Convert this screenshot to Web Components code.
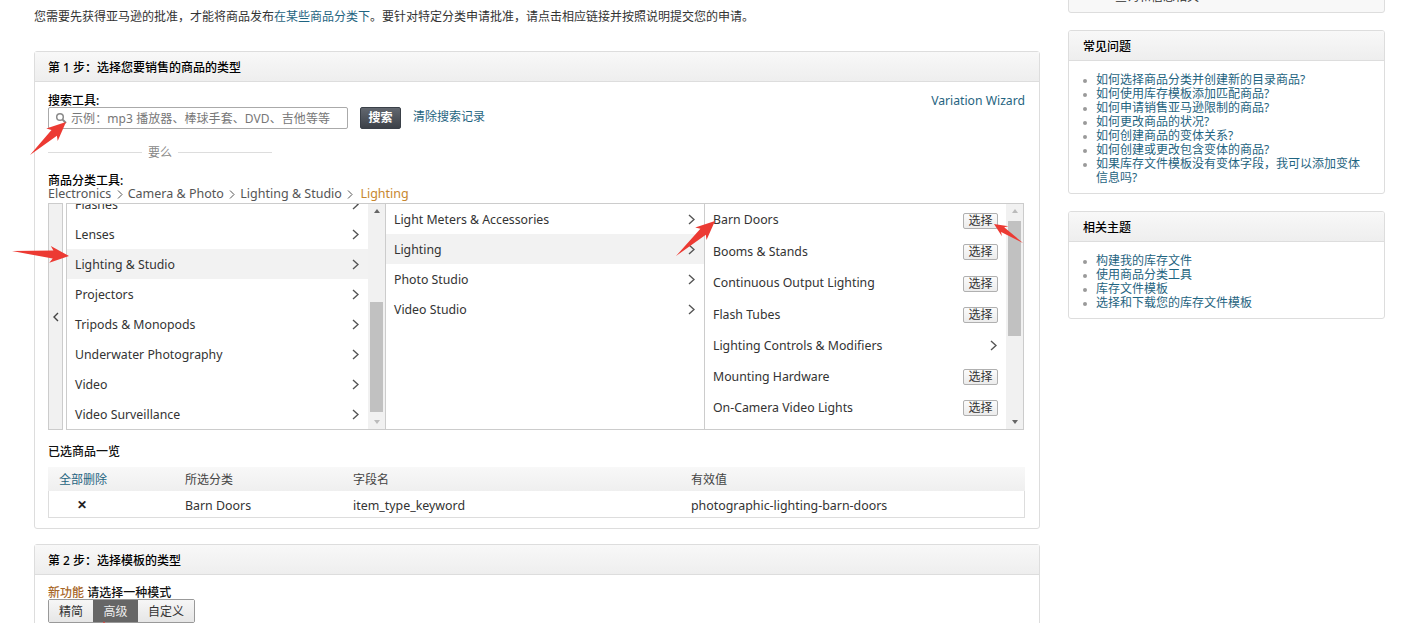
<!DOCTYPE html>
<html lang="zh">
<head>
<meta charset="utf-8">
<title>选择商品分类</title>
<style>
  html, body { margin: 0; height: 623px; overflow: hidden; background: #fff; }
  body { font: 12px/14px "Noto Sans", "Noto Sans CJK SC", sans-serif; color: #333; }
</style>
</head>
<body>
<seller-page>
  <div slot="intro">您需要先获得亚马逊的批准，才能将商品发布<a href="#" style="color:#1f6481;text-decoration:none">在某些商品分类下</a>。要针对特定分类申请批准，请点击相应链接并按照说明提交您的申请。</div>

  <step-card slot="main" heading="第 1 步：选择您要销售的商品的类型" style="height:478px">
    <search-tool></search-tool>
    <category-browser></category-browser>
    <selected-table></selected-table>
  </step-card>

  <step-card slot="main" heading="第 2 步：选择模板的类型" style="height:120px;margin-top:15px">
    <mode-switch></mode-switch>
  </step-card>

  <side-card slot="side" style="height:30px;margin-top:-17px;background:#f8f8f8">
    <div style="padding:6px 0 0 46px;color:#333">查询和信息相关</div>
  </side-card>
  <side-card slot="side" heading="常见问题" style="margin-top:17px">
    <link-list items="如何选择商品分类并创建新的目录商品?|如何使用库存模板添加匹配商品?|如何申请销售亚马逊限制的商品?|如何更改商品的状况?|如何创建商品的变体关系?|如何创建或更改包含变体的商品?|如果库存文件模板没有变体字段，我可以添加变体信息吗?"></link-list>
  </side-card>
  <side-card slot="side" heading="相关主题" style="margin-top:17px">
    <link-list items="构建我的库存文件|使用商品分类工具|库存文件模板|选择和下载您的库存文件模板"></link-list>
  </side-card>

  <red-arrow slot="over" x1="30" y1="155" x2="66" y2="122"></red-arrow>
  <red-arrow slot="over" x1="12" y1="251" x2="69" y2="256"></red-arrow>
  <red-arrow slot="over" x1="676" y1="256" x2="715" y2="221"></red-arrow>
  <red-arrow slot="over" x1="1023" y1="243" x2="994" y2="224" size="0.7"></red-arrow>
  <red-arrow slot="over" x1="104" y1="640" x2="104" y2="621"></red-arrow>
</seller-page>

<script>
class SellerPage extends HTMLElement {
  constructor() {
    super();
    this.attachShadow({mode: "open"}).innerHTML = `
      <style>
        :host { display: flex; gap: 28px; padding-left: 34px; height: 623px; overflow: hidden; position: relative; }
        .main { width: 1006px; flex: none; }
        .intro { height: 51px; padding-top: 10px; box-sizing: border-box; }
        .side { width: 317px; flex: none; }
      </style>
      <div class="main">
        <div class="intro"><slot name="intro"></slot></div>
        <slot name="main"></slot>
      </div>
      <div class="side"><slot name="side"></slot></div>
      <slot name="over"></slot>`;
  }
}

class StepCard extends HTMLElement {
  constructor() {
    super();
    this.attachShadow({mode: "open"}).innerHTML = `
      <style>
        :host { display: block; border: 1px solid #ddd; border-radius: 3px; box-sizing: border-box; }
        header { height: 30px; box-sizing: border-box; padding: 0 13px; line-height: 32px; font-weight: 500; color: #000;
          background: linear-gradient(#f8f8f8, #eeeeee); border-bottom: 1px solid #ddd; }
        .body { padding: 0 14px 0 13px; }
      </style>
      <header></header>
      <div class="body"><slot></slot></div>`;
    this.shadowRoot.querySelector("header").textContent = this.getAttribute("heading");
  }
}

class SideCard extends HTMLElement {
  constructor() {
    super();
    this.attachShadow({mode: "open"}).innerHTML = `
      <style>
        :host { display: block; border: 1px solid #ddd; border-radius: 3px; box-sizing: border-box; overflow: hidden; }
        header { height: 30px; box-sizing: border-box; padding: 0 14px; line-height: 32px; font-weight: 500; color: #000;
          background: linear-gradient(#f8f8f8, #eeeeee); border-bottom: 1px solid #ddd; }
      </style>
      <header></header>
      <slot></slot>`;
    const h = this.shadowRoot.querySelector("header");
    if (this.hasAttribute("heading")) h.textContent = this.getAttribute("heading");
    else h.remove();
  }
}

class LinkList extends HTMLElement {
  constructor() {
    super();
    this.attachShadow({mode: "open"}).innerHTML = `
      <style>
        :host { display: block; padding: 12px 24px 8px 27px; }
        ul { margin: 0; padding: 0; list-style: none; }
        li { position: relative; line-height: 14px; color: #1f6481; }
        li::before { content: ""; position: absolute; left: -13px; top: 6px; width: 4px; height: 4px; border-radius: 50%; background: #9a9a9a; }
      </style>
      <ul></ul>`;
    const ul = this.shadowRoot.querySelector("ul");
    this.getAttribute("items").split("|").forEach(text => {
      const li = document.createElement("li");
      li.textContent = text;
      ul.appendChild(li);
    });
  }
}

class SearchTool extends HTMLElement {
  constructor() {
    super();
    this.attachShadow({mode: "open"}).innerHTML = `
      <style>
        :host { display: block; position: relative; padding-top: 12px; }
        .label { font-weight: 500; color: #000; height: 13px; line-height: 14px; }
        .row { display: flex; align-items: center; height: 22px; }
        .input { width: 300px; height: 22px; box-sizing: border-box; border: 1px solid #aaa; border-radius: 2px;
          display: flex; align-items: center; gap: 4px; padding-left: 6px; color: #777; }
        .input span { position: relative; top: 1px; letter-spacing: .08px; }
        button { margin-left: 12px; width: 41px; height: 22px; padding: 0; border: 1px solid #3a4048; border-radius: 2px;
          background: linear-gradient(#62676f, #3c4148); color: #fff; font: inherit; font-weight: 700; }
        a { margin-left: 12px; color: #1f6481; text-decoration: none; position: relative; top: -1px; }
        .wizard { position: absolute; right: 0; top: 12px; margin: 0; font-size: 12.2px; }
        .or { display: flex; align-items: center; width: 224px; gap: 6px; margin-top: 16px; color: #888; height: 14px; line-height: 14px; }
        .or span { position: relative; top: 1px; }
        .or::before, .or::after { content: ""; height: 1px; background: #ddd; }
        .or::before { width: 94px; }
        .or::after { flex: 1; }
      </style>
      <div class="label">搜索工具:</div>
      <div class="row">
        <div class="input">
          <svg width="12" height="12" viewBox="0 0 12 12" fill="none" stroke="#8a8a8a"><circle cx="5" cy="5" r="3.3" stroke-width="1.5"/><path d="M7.6 7.6L11 11" stroke-width="2"/></svg>
          <span>示例：mp3 播放器、棒球手套、DVD、吉他等等</span>
        </div>
        <button>搜索</button>
        <a href="#">清除搜索记录</a>
      </div>
      <a class="wizard" href="#">Variation Wizard</a>
      <div class="or"><span>要么</span></div>`;
  }
}

class CatRow extends HTMLElement {
  constructor() {
    super();
    const kind = this.getAttribute("kind") || "more";
    this.attachShadow({mode: "open"}).innerHTML = `
      <style>
        :host { display: flex; align-items: center; justify-content: space-between; height: 30px; box-sizing: border-box;
          padding: 0 9px 0 8px; font-size: 12.3px; color: #333; }
        :host([selected]) { background: #f2f2f2; }
        :host([kind="pick"]) { padding-right: 8px; }
        span { position: relative; top: 1px; }
        svg { flex: none; }
        button { width: 35px; height: 16px; margin-top: 3px; padding: 0; box-sizing: border-box; border: 1px solid #b0b0b0; border-radius: 2px;
          background: linear-gradient(#fbfbfb, #ececec); font: 12px/14px "Noto Sans", "Noto Sans CJK SC", sans-serif; color: #333; }
      </style>
      <span><slot></slot></span>
      ${kind === "pick" ? "<button>选择</button>"
        : '<svg width="7" height="11" viewBox="0 0 7 11" fill="none" stroke="#555" stroke-width="1.4"><path d="M1 1l5 4.5L1 10"/></svg>'}`;
  }
}

class ScrollRail extends HTMLElement {
  constructor() {
    super();
    this.attachShadow({mode: "open"}).innerHTML = `
      <style>
        :host { display: flex; flex-direction: column; align-items: center; flex: none; width: 17px; background: #f1f1f1; }
        .up, .down { width: 0; height: 0; border: 3.5px solid transparent; flex: none; margin: 5px 0; }
        .up { border-top: 0; border-bottom: 4px solid #666; }
        .down { border-bottom: 0; border-top: 4px solid #666; }
        .gap { flex: none; }
        .thumb { width: 13px; flex: none; background: #c1c1c1; }
        :host([dim-up]) .up { border-bottom-color: #bbb; }
        :host([dim-down]) .down { border-top-color: #bbb; }
      </style>
      <div class="up"></div>
      <div class="gap"></div>
      <div class="thumb"></div>
      <div style="flex:1"></div>
      <div class="down"></div>`;
    this.shadowRoot.querySelector(".gap").style.height = (this.getAttribute("before") || 0) + "px";
    this.shadowRoot.querySelector(".thumb").style.height = (this.getAttribute("thumb") || 0) + "px";
  }
}

class CategoryBrowser extends HTMLElement {
  constructor() {
    super();
    const chevron = '<svg width="6" height="9" viewBox="0 0 6 9" fill="none" stroke="#555"><path d="M1 .5l4 4-4 4"/></svg>';
    this.attachShadow({mode: "open"}).innerHTML = `
      <style>
        :host { display: block; }
        .label { font-weight: 500; color: #000; margin-top: 14px; height: 14px; line-height: 16px; }
        .crumbs { display: flex; align-items: center; height: 14px; font-size: 12.5px; line-height: 16px; color: #555; }
        .crumbs svg { margin: 0 5px 0 5.5px; }
        .crumbs b { font-weight: 400; color: #c7872f; margin-left: 2px; }
        .wrap { display: flex; margin-top: 2px; height: 227px; }
        .back { width: 15px; flex: none; box-sizing: border-box; background: #f1f1f1; border: 1px solid #ccc;
          display: flex; align-items: center; justify-content: center; margin-right: 3px; }
        .box { flex: none; width: 958px; box-sizing: border-box; display: flex; border: 1px solid #ccc; }
        .col { overflow: hidden; }
        .c1 { width: 301px; }
        .c1 .inner { margin-top: -15px; }
        .c2 { width: 318px; border-left: 1px solid #ccc; box-sizing: content-box; }
        .c3 { flex: 1; border-left: 1px solid #ccc; }
        .c3 .inner { margin-top: -0.6px; }
        .c3 cat-row { height: 31.6px; }
        .c3 cat-row:nth-child(5), .c3 cat-row:nth-child(6) { height: 30.6px; }
      </style>
      <div class="label">商品分类工具:</div>
      <div class="crumbs">Electronics${chevron}Camera &amp; Photo${chevron}Lighting &amp; Studio${chevron}<b>Lighting</b></div>
      <div class="wrap">
        <div class="back"><svg width="6" height="10" viewBox="0 0 6 10" fill="none" stroke="#444" stroke-width="1.4"><path d="M5 1L1 5l4 4"/></svg></div>
        <div class="box">
          <div class="col c1"><div class="inner">
            <cat-row>Flashes</cat-row>
            <cat-row>Lenses</cat-row>
            <cat-row selected>Lighting &amp; Studio</cat-row>
            <cat-row>Projectors</cat-row>
            <cat-row>Tripods &amp; Monopods</cat-row>
            <cat-row>Underwater Photography</cat-row>
            <cat-row>Video</cat-row>
            <cat-row>Video Surveillance</cat-row>
          </div></div>
          <scroll-rail before="84" thumb="110" dim-down></scroll-rail>
          <div class="col c2"><div class="inner">
            <cat-row>Light Meters &amp; Accessories</cat-row>
            <cat-row selected>Lighting</cat-row>
            <cat-row>Photo Studio</cat-row>
            <cat-row>Video Studio</cat-row>
          </div></div>
          <div class="col c3"><div class="inner">
            <cat-row kind="pick">Barn Doors</cat-row>
            <cat-row kind="pick">Booms &amp; Stands</cat-row>
            <cat-row kind="pick">Continuous Output Lighting</cat-row>
            <cat-row kind="pick">Flash Tubes</cat-row>
            <cat-row>Lighting Controls &amp; Modifiers</cat-row>
            <cat-row kind="pick">Mounting Hardware</cat-row>
            <cat-row kind="pick">On-Camera Video Lights</cat-row>
          </div></div>
          <scroll-rail before="3" thumb="115" dim-up></scroll-rail>
        </div>
      </div>`;
  }
}

class SelectedTable extends HTMLElement {
  constructor() {
    super();
    this.attachShadow({mode: "open"}).innerHTML = `
      <style>
        :host { display: block; margin-top: 15px; }
        .title { font-weight: 500; color: #111; height: 14px; line-height: 14px; }
        .grid { display: grid; grid-template-columns: 137px 168px 338px 1fr; margin-top: 8px; width: 977px; }
        .h { height: 24px; line-height: 26px; background: linear-gradient(#f8f8f8, #efefef); color: #444; }
        .c { height: 27px; line-height: 29px; font-size: 12.4px; color: #333; border-bottom: 1px solid #ddd; box-sizing: border-box; }
        a { color: #1f6481; text-decoration: none; }
        .x { padding-left: 28px; line-height: 27px; border-left: 1px solid #ddd; font-weight: 700; color: #222; }
        .last { border-right: 1px solid #ddd; }
      </style>
      <div class="title">已选商品一览</div>
      <div class="grid">
        <div class="h" style="padding-left:11px"><a href="#">全部删除</a></div>
        <div class="h">所选分类</div>
        <div class="h">字段名</div>
        <div class="h">有效值</div>
        <div class="c x">✕</div>
        <div class="c">Barn Doors</div>
        <div class="c">item_type_keyword</div>
        <div class="c last">photographic-lighting-barn-doors</div>
      </div>`;
  }
}

class ModeSwitch extends HTMLElement {
  constructor() {
    super();
    this.attachShadow({mode: "open"}).innerHTML = `
      <style>
        :host { display: block; padding-top: 11px; }
        .title { height: 13px; line-height: 14px; font-weight: 500; color: #111; }
        .title b { font-weight: 500; color: #a8682a; }
        .seg { display: inline-flex; height: 24px; border: 1px solid #999; border-radius: 2px; box-sizing: border-box; }
        .seg span { display: block; line-height: 24px; text-align: center; background: linear-gradient(#f6f6f6, #e6e6e6); color: #333; }
        .seg .on { background: #666; color: #eee; }
      </style>
      <div class="title"><b>新功能</b> 请选择一种模式</div>
      <div class="seg">
        <span style="width:44px">精简</span>
        <span class="on" style="width:45px">高级</span>
        <span style="width:56px">自定义</span>
      </div>`;
  }
}

// red annotation arrows drawn over the screenshot
class RedArrow extends HTMLElement {
  constructor() {
    super();
    const a = n => parseFloat(this.getAttribute(n));
    const x1 = a("x1"), y1 = a("y1"), x2 = a("x2"), y2 = a("y2");
    const size = parseFloat(this.getAttribute("size") || 1);
    const len = Math.hypot(x2 - x1, y2 - y1);
    const dx = (x2 - x1) / len, dy = (y2 - y1) / len;
    const pt = (along, side) => (x2 - dx * along - dy * side).toFixed(1) + "," + (y2 - dy * along + dx * side).toFixed(1);
    const head = 19 * size, wing = 8.5 * size, neck = 4 * size;
    const pts = [pt(len, 0), pt(head - 3, neck), pt(head, wing), pt(0, 0), pt(head, -wing), pt(head - 3, -neck)].join(" ");
    this.attachShadow({mode: "open"}).innerHTML = `
      <style>
        :host { position: absolute; left: 0; top: 0; width: 0; height: 0; }
        svg { position: absolute; left: 0; top: 0; overflow: visible; }
      </style>
      <svg width="1" height="1"><polygon points="${pts}" fill="#ec3a33"/></svg>`;
  }
}

customElements.define("seller-page", SellerPage);
customElements.define("step-card", StepCard);
customElements.define("side-card", SideCard);
customElements.define("link-list", LinkList);
customElements.define("search-tool", SearchTool);
customElements.define("cat-row", CatRow);
customElements.define("scroll-rail", ScrollRail);
customElements.define("category-browser", CategoryBrowser);
customElements.define("selected-table", SelectedTable);
customElements.define("mode-switch", ModeSwitch);
customElements.define("red-arrow", RedArrow);
</script>
</body>
</html>
